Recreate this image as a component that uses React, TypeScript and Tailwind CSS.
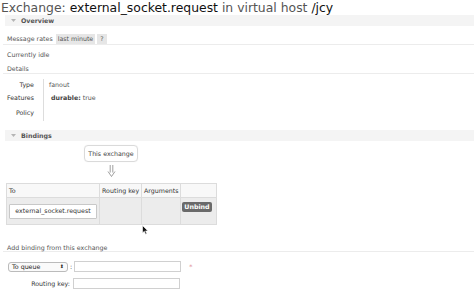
import React from 'react';

const Caret = () => (
  <svg width="5" height="3" viewBox="0 0 5 3" className="mr-[5px]">
    <polygon points="0,0 5,0 2.5,3" fill="#b5b5b5" />
  </svg>
);

const SectionBar = ({ title }: { title: string }) => (
  <div className="ml-[5px] h-[11px] bg-[#f4f4f4] flex items-center pl-[6px]">
    <Caret />
    <span className="text-[6.3px] font-bold text-[#555]">{title}</span>
  </div>
);

const DetailRow = ({ label, value, h }: { label: string; value: React.ReactNode; h: string }) => (
  <div className={`flex ${h}`}>
    <div className="w-[44px] shrink-0 flex items-center justify-end pr-[9px] border-r border-[#ddd] text-[#333]">{label}</div>
    <div className="flex items-center pl-[5px] text-[#555]">{value}</div>
  </div>
);

const DownArrow = () => (
  <svg width="9" height="12" viewBox="0 0 9 12" fill="none" stroke="#777" strokeWidth="0.7">
    <path d="M3.2 0 V7.5 M5.8 0 V7.5 M1 6.5 L4.5 11.5 L8 6.5" />
  </svg>
);

const Cursor = () => (
  <svg width="7" height="10" viewBox="0 0 7 10" className="absolute left-[142px] top-[225px]">
    <path d="M0.5 0.5 L0.5 8 L2.3 6.3 L3.6 9.3 L4.8 8.8 L3.6 5.9 L6 5.9 Z" fill="#111" stroke="#fff" strokeWidth="0.6" />
  </svg>
);

export default function App() {
  return (
    <div className="relative w-[474px] h-[293px] overflow-hidden bg-white font-['DejaVu_Sans',sans-serif] text-[6.3px] text-[#444]">
      <h1 className="mt-[1px] pl-[1px] text-[12.4px] leading-[14px] text-[#555] whitespace-nowrap">
        Exchange: <span className="text-[#111]">external_socket.request</span> in virtual host{' '}
        <span className="text-[#111]">/jcy</span>
      </h1>

      <SectionBar title="Overview" />

      <div className="mt-[7px] ml-[3px] pl-[4px] h-[12px] flex items-center border-b border-[#ececec]">
        <span className="text-[#555] mr-[3px]">Message rates</span>
        <span className="bg-[#e6e6e6] px-[2px] h-[10px] flex items-center text-[#555]">last minute</span>
        <span className="bg-[#e6e6e6] ml-[2px] px-[3px] h-[10px] flex items-center text-[#555]">?</span>
      </div>

      <div className="pl-[7px] h-[20px] flex items-center text-[#555]">Currently idle</div>
      <div className="ml-[3px] pl-[4px] h-[9px] flex items-center border-b border-[#ececec] text-[#555]">Details</div>

      <div className="mt-[5px] pb-[3px] w-[200px]">
        <DetailRow label="Type" value="fanout" h="h-[12px]" />
        <DetailRow
          label="Features"
          value={
            <span className="pl-[2px]">
              <b className="text-[#444]">durable:</b> true
            </span>
          }
          h="h-[14px]"
        />
        <DetailRow label="Policy" value="" h="h-[16px]" />
      </div>

      <div className="mt-[6px]">
        <SectionBar title="Bindings" />
      </div>

      <div className="ml-[84px] mt-[4px] w-[54px] h-[17px] rounded-[4px] border border-[#dadada] shadow-[0_0_1px_#e5e5e5] flex items-center justify-center text-[#444]">
        This exchange
      </div>
      <div className="ml-[107px] mt-[3px] h-[12px]">
        <DownArrow />
      </div>

      <table className="ml-[6px] mt-[6px] w-[211px] border-collapse border border-[#dcdcdc] text-left">
        <thead>
          <tr className="h-[14px] bg-[#f8f8f8] text-[#333]">
            <th className="w-[93px] font-normal pl-[2px] border border-[#dcdcdc]">To</th>
            <th className="w-[42px] font-normal pl-[2px] border border-[#dcdcdc]">Routing key</th>
            <th className="w-[39px] font-normal pl-[2px] border border-[#dcdcdc]">Arguments</th>
            <th className="font-normal border border-[#dcdcdc]"></th>
          </tr>
        </thead>
        <tbody>
          <tr className="h-[27px] bg-[#ececec]">
            <td className="border border-[#dcdcdc] px-[2px]">
              <div className="h-[15px] bg-white border border-[#c8c8c8] rounded-[1px] flex items-center justify-center text-[#333]">
                external_socket.request
              </div>
            </td>
            <td className="border border-[#dcdcdc]"></td>
            <td className="border border-[#dcdcdc]"></td>
            <td className="border border-[#dcdcdc] align-top pt-[4px] pl-[1px]">
              <span className="inline-flex items-center justify-center w-[30px] h-[10px] rounded-[2px] bg-[#6a6a6a] text-white font-bold">
                Unbind
              </span>
            </td>
          </tr>
        </tbody>
      </table>

      <div className="mt-[18px] ml-[3px] pl-[4px] h-[9px] flex items-start border-b border-[#ececec] text-[#555]">
        Add binding from this exchange
      </div>

      <div className="mt-[9px] flex items-center h-[11px]">
        <div className="ml-[8px] w-[60px] h-[10px] rounded-[3px] border border-[#bbb] bg-[#fafafa] flex items-center justify-between px-[3px] text-[#222]">
          <span>To queue</span>
          <span className="text-[5px] leading-none">⬍</span>
        </div>
        <span className="ml-[2px] text-[#333]">:</span>
        <div className="ml-[2px] w-[107px] h-[11px] border border-[#d0d0d0] bg-white"></div>
        <span className="ml-[8px] text-[#e0909a]">*</span>
      </div>

      <div className="mt-[6px] flex items-center h-[11px]">
        <span className="w-[71px] pr-[1px] text-right text-[#333]">Routing key:</span>
        <div className="ml-[2px] w-[107px] h-[11px] border border-[#d0d0d0] bg-white"></div>
      </div>

      <div className="mt-[4px] border-b border-[#ececec]"></div>

      <Cursor />
    </div>
  );
}
